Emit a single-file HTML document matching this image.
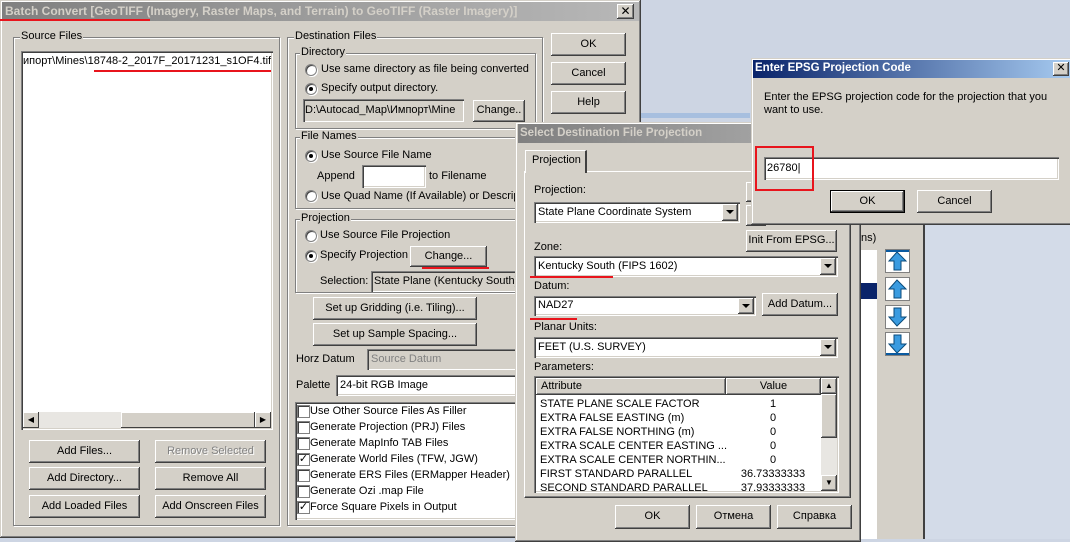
<!DOCTYPE html><html><head><meta charset="utf-8"><style>
*{box-sizing:border-box;margin:0;padding:0}
body{width:1070px;height:539px;overflow:hidden;position:relative;background:#cdd5e3;font-family:"Liberation Sans","DejaVu Sans",sans-serif;font-size:11px;color:#000}
.a{position:absolute;white-space:nowrap}
.win{position:absolute;background:#d4d0c8;box-shadow:inset -1px -1px #404040,inset 1px 1px #d4d0c8,inset -2px -2px #808080,inset 2px 2px #fff}
.btn{position:absolute;background:#d4d0c8;box-shadow:inset -1px -1px #404040,inset 1px 1px #fff,inset -2px -2px #808080;text-align:center;white-space:nowrap;font-size:11px}
.btnd{box-shadow:0 0 0 1px #000,inset -1px -1px #404040,inset 1px 1px #fff,inset -2px -2px #808080}
.fld{position:absolute;background:#fff;box-shadow:inset 1px 1px #808080,inset 2px 2px #404040,inset -1px -1px #fff,inset -2px -2px #d4d0c8;white-space:nowrap;overflow:hidden;padding-left:4px;font-size:11px}
.grp{position:absolute;border:1px solid #808080;box-shadow:1px 1px #fff,inset 1px 1px #fff}
.gl{position:absolute;top:-8px;left:6px;background:#d4d0c8;padding:0 1px;font-size:11px;white-space:nowrap}
.rad{position:absolute;width:12px;height:12px;border-radius:50%;background:#fff;border:1px solid #808080;box-shadow:inset 1px 1px #404040,1px 1px #fff}
.rad.on::after{content:"";position:absolute;left:3px;top:3px;width:4px;height:4px;border-radius:50%;background:#000}
.cb{position:absolute;width:13px;height:13px;background:#fff;border:1px solid #808080;box-shadow:inset 1px 1px #404040;font-size:11px;line-height:11px;text-align:center;font-weight:bold}
.t{position:absolute;white-space:nowrap;font-size:11px}
.red{position:absolute;background:#e8141c;height:2px}
.dd{position:absolute;right:2px;top:2px;bottom:2px;width:16px;background:#d4d0c8;box-shadow:inset -1px -1px #404040,inset 1px 1px #fff,inset -2px -2px #808080}
.dd::after{content:"";position:absolute;left:4px;top:6px;border:4px solid transparent;border-top:4px solid #000;border-bottom:none}
</style></head><body>

<div class="a" style="left:924px;top:95px;width:146px;height:444px;background:#d3dbe8"></div>
<div class="a" style="left:640px;top:113px;width:110px;height:5px;background:#a7bfdf"></div>
<div class="a" style="left:630px;top:225px;width:295px;height:314px;background:#d4d0c8;border-right:2px solid #404040"></div>
<div class="t" style="left:861px;top:232px">ns)</div>
<div class="a" style="left:860px;top:250px;width:18px;height:289px;background:#fff;border-right:1px solid #d4d0c8"></div>
<div class="a" style="left:860px;top:283px;width:17px;height:16px;background:#0a246a"></div>
<svg class="a" style="left:884px;top:248px" width="28" height="112" viewBox="0 0 28 112">
<g fill="#fff" stroke="#808080"><rect x="1.5" y="1.5" width="24" height="23"/><rect x="1.5" y="29.5" width="24" height="23"/><rect x="1.5" y="57.5" width="24" height="23"/><rect x="1.5" y="84.5" width="24" height="23"/></g>
<g fill="#3a9be0" stroke="#0a4a7a"><path d="M13 4 L22 13 L17 13 L17 22 L10 22 L10 13 L5 13Z"/><path d="M13 32 L22 41 L17 41 L17 50 L10 50 L10 41 L5 41Z"/><path d="M13 78 L22 69 L17 69 L17 60 L10 60 L10 69 L5 69Z"/><path d="M13 105 L22 96 L17 96 L17 87 L10 87 L10 96 L5 96Z"/></g>
<rect x="2" y="2" width="23" height="2" fill="#0a5aa0"/><rect x="2" y="105" width="23" height="2" fill="#0a5aa0"/></svg>

<div class="win" style="left:0;top:0;width:641px;height:538px"></div>
<div class="a" style="left:2px;top:2px;width:637px;height:19px;background:linear-gradient(90deg,#808080,#b8b8b8)"></div>
<div class="a" style="left:5px;top:4px;color:#d4d0c8;font-weight:bold;font-size:12px">Batch Convert [GeoTIFF (Imagery, Raster Maps, and Terrain) to GeoTIFF (Raster Imagery)]</div>
<div class="btn" style="left:617px;top:4px;width:17px;height:15px;font-size:12px;line-height:14px;font-weight:bold">✕</div>
<div class="red" style="left:0;top:19px;width:150px"></div>

<div class="grp" style="left:13px;top:37px;width:267px;height:489px"><div class="gl">Source Files</div></div>
<div class="fld" style="left:21px;top:51px;width:252px;height:379px;padding:2px 0 0 0">
<div class="t" style="left:2px;top:4px">ипорт\Mines\18748-2_2017F_20171231_s1OF4.tif</div>
<div class="a" style="left:2px;bottom:2px;width:248px;height:16px;background:#e8e6e2"></div>
<div class="a" style="left:2px;bottom:2px;width:16px;height:16px;background:#d4d0c8;box-shadow:inset -1px -1px #404040,inset 1px 1px #fff;font-size:8px;line-height:16px;text-align:center">◀</div>
<div class="a" style="left:100px;bottom:2px;width:134px;height:16px;background:#d4d0c8;box-shadow:inset -1px -1px #404040,inset 1px 1px #fff"></div>
<div class="a" style="left:234px;bottom:2px;width:16px;height:16px;background:#d4d0c8;box-shadow:inset -1px -1px #404040,inset 1px 1px #fff;font-size:8px;line-height:16px;text-align:center">▶</div>
</div>
<div class="red" style="left:94px;top:70px;width:177px"></div>
<div class="btn" style="left:29px;top:440px;width:111px;height:23px;line-height:22px">Add Files...</div>
<div class="btn" style="left:155px;top:440px;width:111px;height:23px;line-height:22px;color:#808080;text-shadow:1px 1px #fff">Remove Selected</div>
<div class="btn" style="left:29px;top:467px;width:111px;height:23px;line-height:22px">Add Directory...</div>
<div class="btn" style="left:155px;top:467px;width:111px;height:23px;line-height:22px">Remove All</div>
<div class="btn" style="left:29px;top:495px;width:111px;height:23px;line-height:22px">Add Loaded Files</div>
<div class="btn" style="left:155px;top:495px;width:111px;height:23px;line-height:22px">Add Onscreen Files</div>

<div class="grp" style="left:287px;top:37px;width:256px;height:489px"><div class="gl">Destination Files</div></div>
<div class="grp" style="left:295px;top:53px;width:241px;height:76px"><div class="gl" style="left:4px">Directory</div></div>
<div class="rad" style="left:305px;top:64px"></div><div class="t" style="left:321px;top:63px">Use same directory as file being converted</div>
<div class="rad on" style="left:305px;top:83px"></div><div class="t" style="left:321px;top:82px">Specify output directory.</div>
<div class="fld" style="left:303px;top:99px;width:161px;height:23px;line-height:22px;background:#d4d0c8;padding-left:2px">D:\Autocad_Map\Импорт\Mine</div>
<div class="btn" style="left:473px;top:100px;width:52px;height:22px;line-height:21px">Change..</div>

<div class="grp" style="left:295px;top:137px;width:241px;height:72px"><div class="gl" style="left:4px">File Names</div></div>
<div class="rad on" style="left:305px;top:150px"></div><div class="t" style="left:321px;top:149px">Use Source File Name</div>
<div class="t" style="left:317px;top:170px">Append</div>
<div class="fld" style="left:362px;top:165px;width:64px;height:23px"></div>
<div class="t" style="left:429px;top:170px">to Filename</div>
<div class="rad" style="left:305px;top:190px"></div><div class="t" style="left:321px;top:190px">Use Quad Name (If Available) or Descript</div>

<div class="grp" style="left:295px;top:219px;width:241px;height:74px"><div class="gl" style="left:4px">Projection</div></div>
<div class="rad" style="left:305px;top:230px"></div><div class="t" style="left:320px;top:229px">Use Source File Projection</div>
<div class="rad on" style="left:305px;top:250px"></div><div class="t" style="left:320px;top:249px">Specify Projection</div>
<div class="btn" style="left:410px;top:246px;width:77px;height:21px;line-height:20px">Change...</div>
<div class="red" style="left:422px;top:267px;width:67px"></div>
<div class="t" style="left:320px;top:275px">Selection:</div>
<div class="fld" style="left:371px;top:271px;width:150px;height:21px;line-height:20px;background:#d4d0c8;padding-left:3px">State Plane (Kentucky South)</div>

<div class="btn" style="left:313px;top:297px;width:164px;height:23px;line-height:22px">Set up Gridding (i.e. Tiling)...</div>
<div class="btn" style="left:313px;top:323px;width:164px;height:23px;line-height:22px">Set up Sample Spacing...</div>
<div class="t" style="left:296px;top:353px">Horz Datum</div>
<div class="fld" style="left:367px;top:349px;width:155px;height:21px;line-height:20px;background:#d4d0c8;color:#808080">Source Datum</div>
<div class="t" style="left:296px;top:379px">Palette</div>
<div class="fld" style="left:336px;top:375px;width:186px;height:21px;line-height:20px">24-bit RGB Image</div>
<div class="fld" style="left:295px;top:402px;width:230px;height:118px;padding:0"></div>
<div class="cb" style="left:297px;top:405px"></div><div class="t" style="left:310px;top:405px">Use Other Source Files As Filler</div>
<div class="cb" style="left:297px;top:421px"></div><div class="t" style="left:310px;top:421px">Generate Projection (PRJ) Files</div>
<div class="cb" style="left:297px;top:437px"></div><div class="t" style="left:310px;top:437px">Generate MapInfo TAB Files</div>
<div class="cb" style="left:297px;top:453px">✓</div><div class="t" style="left:310px;top:453px">Generate World Files (TFW, JGW)</div>
<div class="cb" style="left:297px;top:469px"></div><div class="t" style="left:310px;top:469px">Generate ERS Files (ERMapper Header)</div>
<div class="cb" style="left:297px;top:485px"></div><div class="t" style="left:310px;top:485px">Generate Ozi .map File</div>
<div class="cb" style="left:297px;top:501px">✓</div><div class="t" style="left:310px;top:501px">Force Square Pixels in Output</div>

<div class="btn" style="left:551px;top:33px;width:75px;height:23px;line-height:22px">OK</div>
<div class="btn" style="left:551px;top:62px;width:75px;height:23px;line-height:22px">Cancel</div>
<div class="btn" style="left:551px;top:91px;width:75px;height:23px;line-height:22px">Help</div>

<div class="win" style="left:515px;top:122px;width:346px;height:420px"></div>
<div class="a" style="left:518px;top:124px;width:340px;height:19px;background:linear-gradient(90deg,#808080,#b0b0b0)"></div>
<div class="a" style="left:520px;top:127px;color:#d4d0c8;font-weight:bold;font-size:11.5px">Select Destination File Projection</div>
<div class="a" style="left:524px;top:171px;width:327px;height:327px;border:1px solid #fff;border-right-color:#404040;border-bottom-color:#404040;box-shadow:inset -1px -1px #808080"></div>
<div class="a" style="left:525px;top:150px;width:62px;height:23px;background:#d4d0c8;border:1px solid #fff;border-bottom:none;border-right:2px solid #404040"></div>
<div class="t" style="left:532px;top:154px">Projection</div>
<div class="t" style="left:534px;top:184px">Projection:</div>
<div class="fld" style="left:534px;top:202px;width:206px;height:21px;line-height:20px">State Plane Coordinate System<div class="dd"></div></div>
<div class="btn" style="left:746px;top:182px;width:20px;height:20px"></div>
<div class="btn" style="left:746px;top:205px;width:20px;height:21px"></div>
<div class="btn" style="left:746px;top:230px;width:91px;height:22px;line-height:21px">Init From EPSG...</div>
<div class="t" style="left:534px;top:241px">Zone:</div>
<div class="fld" style="left:534px;top:256px;width:304px;height:21px;line-height:20px">Kentucky South (FIPS 1602)<div class="dd"></div></div>
<div class="red" style="left:530px;top:276px;width:83px"></div>
<div class="t" style="left:534px;top:280px">Datum:</div>
<div class="fld" style="left:534px;top:296px;width:222px;height:20px;line-height:19px">NAD27<div class="dd"></div></div>
<div class="red" style="left:530px;top:318px;width:47px"></div>
<div class="btn" style="left:762px;top:293px;width:76px;height:23px;line-height:22px">Add Datum...</div>
<div class="t" style="left:534px;top:321px">Planar Units:</div>
<div class="fld" style="left:534px;top:337px;width:304px;height:21px;line-height:20px">FEET (U.S. SURVEY)<div class="dd"></div></div>
<div class="t" style="left:534px;top:361px">Parameters:</div>
<div class="fld" style="left:534px;top:376px;width:305px;height:117px;padding:0"></div>
<div class="btn" style="left:536px;top:378px;width:190px;height:17px;text-align:left;padding-left:5px;line-height:16px">Attribute</div>
<div class="btn" style="left:726px;top:378px;width:95px;height:17px;line-height:16px">Value</div>
<div class="a" style="left:821px;top:378px;width:16px;height:113px;background:#e8e6e2"></div>
<div class="btn" style="left:821px;top:378px;width:16px;height:16px;font-size:8px;line-height:16px">▲</div>
<div class="btn" style="left:821px;top:394px;width:16px;height:44px"></div>
<div class="btn" style="left:821px;top:475px;width:16px;height:16px;font-size:8px;line-height:16px">▼</div>
<div class="a" style="left:537px;top:396px;width:284px;height:95px;overflow:hidden;font-size:11px;line-height:14px">
<div style="position:absolute;left:3px;top:1px">STATE PLANE SCALE FACTOR<br>EXTRA FALSE EASTING (m)<br>EXTRA FALSE NORTHING (m)<br>EXTRA SCALE CENTER EASTING ...<br>EXTRA SCALE CENTER NORTHIN...<br>FIRST STANDARD PARALLEL<br>SECOND STANDARD PARALLEL</div>
<div style="position:absolute;left:190px;width:92px;top:1px;text-align:center">1<br>0<br>0<br>0<br>0<br>36.73333333<br>37.93333333</div></div>
<div class="btn" style="left:615px;top:505px;width:75px;height:24px;line-height:23px">OK</div>
<div class="btn" style="left:696px;top:505px;width:75px;height:24px;line-height:23px">Отмена</div>
<div class="btn" style="left:777px;top:505px;width:75px;height:24px;line-height:23px">Справка</div>

<div class="win" style="left:751px;top:58px;width:325px;height:167px"></div>
<div class="a" style="left:753px;top:60px;width:317px;height:18px;background:linear-gradient(90deg,#0a246a,#a6caf0)"></div>
<div class="a" style="left:755px;top:62px;color:#fff;font-weight:bold;font-size:11.5px">Enter EPSG Projection Code</div>
<div class="btn" style="left:1053px;top:62px;width:16px;height:14px;font-size:11px;line-height:13px;font-weight:bold">✕</div>
<div class="t" style="left:764px;top:91px;line-height:13px">Enter the EPSG projection code for the projection that you<br>want to use.</div>
<div class="fld" style="left:764px;top:157px;width:295px;height:23px;line-height:22px;padding-left:3px">26780|</div>
<div class="a" style="left:755px;top:146px;width:59px;height:45px;border:2px solid #e8141c"></div>
<div class="btn btnd" style="left:831px;top:191px;width:73px;height:21px;line-height:20px">OK</div>
<div class="btn" style="left:917px;top:190px;width:75px;height:23px;line-height:22px">Cancel</div>
</body></html>
